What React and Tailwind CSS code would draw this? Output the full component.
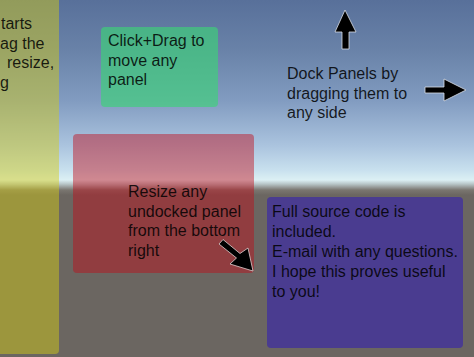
import React from "react";

const font = { fontFamily: '"Liberation Sans", Arial, sans-serif' };

export default function App() {
  return (
    <div
      className="relative w-[474px] h-[357px] overflow-hidden bg-[linear-gradient(to_bottom,#58709a_0px,#6982a8_50px,#819bc0_100px,#aac3de_145px,#c8e0ee_170px,#dcf0f4_180px,#b8c6c8_184px,#7a7670_190px,#6b6661_195px,#6b6661_357px)]"
      style={font}
    >
      {/* Yellow docked panel (left, clipped) */}
      <div className="absolute left-0 top-0 w-[59px] h-[354px] rounded-br-[4px] bg-[rgba(212,204,22,0.47)] overflow-hidden">
        <div className="pt-[14px] text-[16px] leading-[19.5px] text-[rgba(0,0,0,0.85)] whitespace-nowrap">
          <div className="pl-[1px]">tarts</div>
          <div className="pl-[0px]">ag the</div>
          <div className="pl-[7px]">resize,</div>
          <div className="pl-[0px]">g</div>
        </div>
      </div>

      {/* Green panel */}
      <div className="absolute left-[101px] top-[27px] w-[117px] h-[80px] rounded-[4px] bg-[rgba(60,210,120,0.65)] px-[7px] pt-[4px] text-[16px] leading-[19.5px] text-[rgba(0,0,0,0.85)]">
        <div>Click+Drag to</div>
        <div>move any</div>
        <div>panel</div>
      </div>

      {/* Dock text */}
      <div className="absolute left-[287px] top-[64px] text-[16px] leading-[19.5px] text-[rgba(0,0,0,0.85)] whitespace-nowrap">
        <div>Dock Panels by</div>
        <div>dragging them to</div>
        <div>any side</div>
      </div>

      {/* Red panel */}
      <div className="absolute left-[73px] top-[134px] w-[181px] h-[139px] rounded-[4px] bg-[rgba(192,12,24,0.45)]">
        <div className="pl-[55px] pt-[48px] text-[16px] leading-[19.5px] text-[rgba(0,0,0,0.85)] whitespace-nowrap">
          <div>Resize any</div>
          <div>undocked panel</div>
          <div>from the bottom</div>
          <div>right</div>
        </div>
      </div>

      {/* Purple panel */}
      <div className="absolute left-[267px] top-[197px] w-[196px] h-[151px] rounded-[4px] bg-[#4a3c90] px-[5px] pt-[5px] text-[16px] leading-[20px] text-[rgba(0,0,0,0.85)] whitespace-nowrap">
        <div>Full source code is</div>
        <div>included.</div>
        <div>E-mail with any questions.</div>
        <div>I hope this proves useful</div>
        <div>to you!</div>
      </div>

      {/* Arrows */}
      <svg className="absolute inset-0 pointer-events-none" width="474" height="357" viewBox="0 0 474 357">
        <polygon
          points="345,10 356,32 349,32 349,49 342,49 342,32 335,32"
          fill="#000"
          stroke="#d8dde6"
          strokeWidth="0.8"
        />
        <polygon
          points="466,90 444,79 444,87 425,87 425,93 444,93 444,101"
          fill="#000"
          stroke="#d8dde6"
          strokeWidth="0.8"
        />
        <polygon
          points="253,271 230,264 236.5,258 219,244 223,239.5 240,253.5 248,248"
          fill="#000"
          stroke="#e0d0d0"
          strokeWidth="0.8"
        />
      </svg>
    </div>
  );
}
